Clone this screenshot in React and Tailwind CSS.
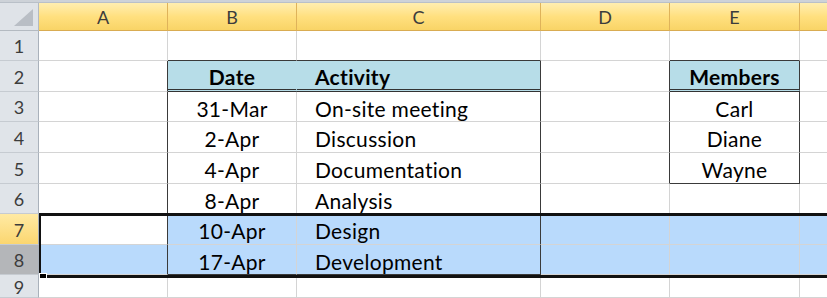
import React from "react";

const FONT = { fontFamily: "Lato, 'Open Sans', sans-serif" };

const G = "border-r-[#d4d4d4]";
const GB = "border-b-[#d4d4d4]";
const DR = "border-r-[#3a3a3a]";
const DB = "border-b-[#3a3a3a]";

function Cell({ w, text, align = "center", bold, bg = "bg-white", r = G, b = GB, dbl, pl }) {
  const al = align === "center" ? "justify-center" : "justify-start";
  return (
    <div
      className={`${w} h-full shrink-0 flex items-center ${al} ${bg} border-r ${r} ${
        dbl ? "border-b-[3px] border-double border-b-[#333333]" : `border-b ${b}`
      } ${pl ? "pl-[18px]" : ""} ${bold ? "font-bold" : ""} text-[21px] tracking-[0.3px] text-black leading-none pt-[3px] whitespace-nowrap overflow-hidden`}
    >
      {text}
    </div>
  );
}

const BLUE = "bg-[#b7dde8]";
const SEL = "bg-[#b9dafc]";

const rows = [
  { n: 1, h: "h-[30px]", hb: "bg-[#e0e4e9]", cells: [{}, { b: DB }, { b: DB }, {}, { b: DB }, {}] },
  {
    n: 2, h: "h-[31px]", hb: "bg-[#e0e4e9]",
    cells: [
      { r: DR },
      { text: "Date", bold: true, bg: BLUE, r: "border-r-[#b7dde8]", dbl: true },
      { text: "Activity", bold: true, bg: BLUE, r: DR, dbl: true, align: "left", pl: true },
      { r: DR },
      { text: "Members", bold: true, bg: BLUE, r: DR, dbl: true },
      {},
    ],
  },
  {
    n: 3, h: "h-[30px]", hb: "bg-[#e0e4e9]",
    cells: [{ r: DR }, { text: "31-Mar" }, { text: "On-site meeting", align: "left", pl: true, r: DR }, { r: DR }, { text: "Carl", r: DR }, {}],
  },
  {
    n: 4, h: "h-[31px]", hb: "bg-[#e0e4e9]",
    cells: [{ r: DR }, { text: "2-Apr" }, { text: "Discussion", align: "left", pl: true, r: DR }, { r: DR }, { text: "Diane", r: DR }, {}],
  },
  {
    n: 5, h: "h-[31px]", hb: "bg-[#e0e4e9]",
    cells: [{ r: DR }, { text: "4-Apr" }, { text: "Documentation", align: "left", pl: true, r: DR }, { r: DR }, { text: "Wayne", r: DR, b: DB }, {}],
  },
  {
    n: 6, h: "h-[30px]", hb: "bg-[#e0e4e9]",
    cells: [{ r: DR }, { text: "8-Apr" }, { text: "Analysis", align: "left", pl: true, r: DR }, {}, {}, {}],
  },
  {
    n: 7, h: "h-[31px]", hb: "bg-gradient-to-b from-[#ffeaa3] to-[#fbd66f]",
    cells: [
      { r: DR },
      { text: "10-Apr", bg: SEL },
      { text: "Design", align: "left", pl: true, r: DR, bg: SEL },
      { bg: SEL },
      { bg: SEL },
      { bg: SEL },
    ],
  },
  {
    n: 8, h: "h-[30px]", hb: "bg-[#b4b6b9]",
    cells: [
      { r: DR, bg: SEL },
      { text: "17-Apr", bg: SEL, b: DB },
      { text: "Development", align: "left", pl: true, r: DR, bg: SEL, b: DB },
      { bg: SEL },
      { bg: SEL },
      { bg: SEL },
    ],
  },
  { n: 9, h: "h-[23px]", hb: "bg-[#e0e4e9]", cells: [{}, {}, {}, {}, {}, {}] },
];

const widths = ["w-[129px]", "w-[129px]", "w-[244px]", "w-[129px]", "w-[130px]", "w-[60px]"];
const letters = ["A", "B", "C", "D", "E", ""];

export default function App() {
  return (
    <div className="relative w-[827px] h-[298px] overflow-hidden bg-white" style={FONT}>
      <div className="h-[3px] bg-[#cdd2d8] border-b border-b-[#b9c0c8]" />
      <div className="flex h-[28px]">
        <div className="w-[39px] shrink-0 h-full bg-[#dfe3e8] border-r border-r-[#b4bac1] border-b border-b-[#b4bac1] flex items-end justify-end pr-[5px] pb-[4px]">
          <svg width="19" height="17" viewBox="0 0 19 17">
            <polygon points="19,0 19,17 0,17" fill="#b9bec5" />
          </svg>
        </div>
        {widths.map((w, i) => (
          <div
            key={i}
            className={`${w} shrink-0 h-full flex items-center justify-center bg-gradient-to-b from-[#ffeeb0] via-[#ffe07f] to-[#f9d466] border-r border-r-[#dfb35a] border-b border-b-[#d9ac52] text-[18px] text-[#3c3c3c] pt-[2px]`}
          >
            {letters[i]}
          </div>
        ))}
      </div>
      {rows.map((row) => (
        <div key={row.n} className={`flex ${row.h}`}>
          <div
            className={`w-[39px] shrink-0 h-full flex items-center justify-center ${row.hb} border-r border-r-[#a9b1bb] border-b border-b-[#c6cbd1] text-[18px] text-[#3c3c3c] pt-[2px]`}
          >
            {row.n}
          </div>
          {row.cells.map((c, i) => (
            <Cell key={i} w={widths[i]} {...c} />
          ))}
        </div>
      ))}
      <div className="absolute left-[39px] top-[213px] right-0 h-[65px] border-t-[3px] border-b-[3px] border-l-2 border-[#111111] pointer-events-none" />
      <div className="absolute left-[39px] top-[273px] w-[8px] h-[6px] bg-black border border-white pointer-events-none" />
    </div>
  );
}
